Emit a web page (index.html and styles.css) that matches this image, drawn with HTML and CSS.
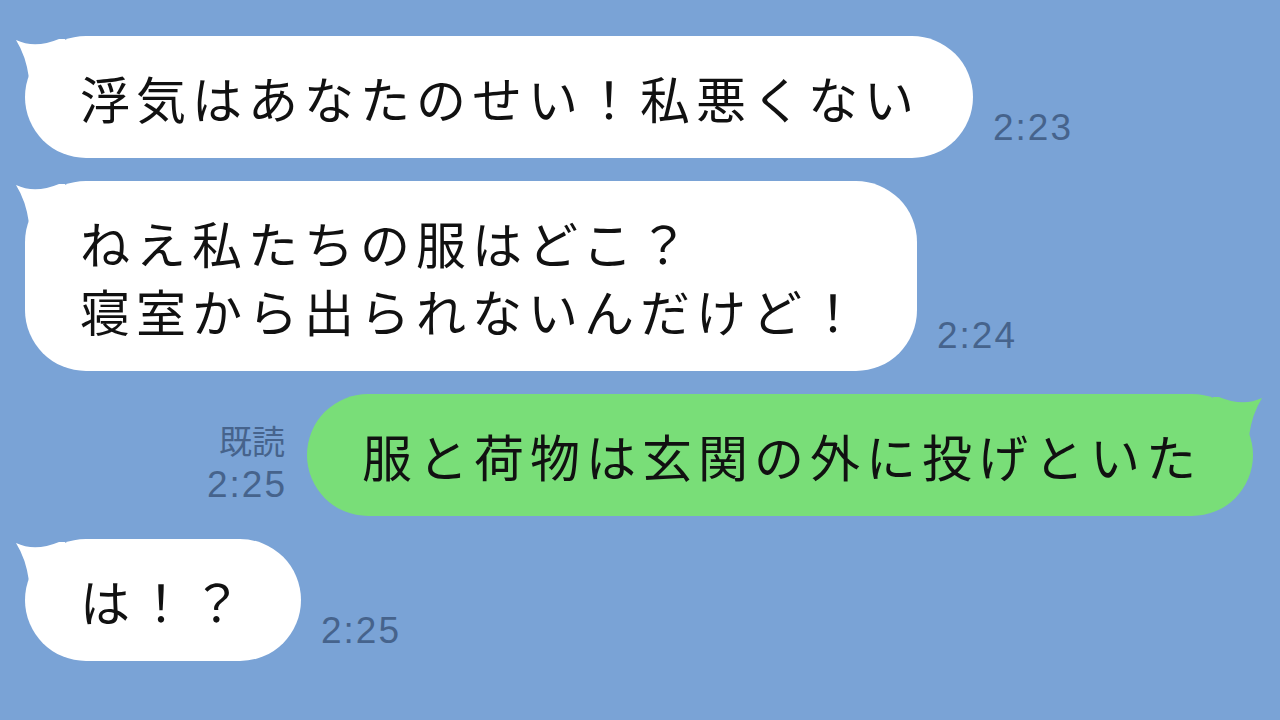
FILE: index.html
```html
<!DOCTYPE html>
<html lang="ja">
<head>
  <meta charset="UTF-8" />
  <title>トーク</title>
  <link rel="stylesheet" href="styles.css">
</head>
<body>
  <div class="chat">
    <div class="row">
      <div class="bubble left">
        <svg class="tail" viewBox="0 0 50 60"><path d="M1 4 Q20 13 44 3 L50 3 L50 60 L12 60 L14 42 Q11 20 1 4 Z"/></svg>
        <p>浮気はあなたのせい！私悪くない</p>
      </div>
      <span class="time">2:23</span>
    </div>

    <div class="row">
      <div class="bubble left">
        <svg class="tail" viewBox="0 0 50 60"><path d="M1 4 Q20 13 44 3 L50 3 L50 60 L12 60 L14 42 Q11 20 1 4 Z"/></svg>
        <p>ねえ私たちの服はどこ？<br>寝室から出られないんだけど！</p>
      </div>
      <span class="time raised">2:24</span>
    </div>

    <div class="row mine">
      <div class="meta">
        <span class="read">既読</span>
        <span class="time">2:25</span>
      </div>
      <div class="bubble right">
        <svg class="tail" viewBox="0 0 50 60"><path d="M1 4 Q20 13 44 3 L50 3 L50 60 L12 60 L14 42 Q11 20 1 4 Z"/></svg>
        <p>服と荷物は玄関の外に投げといた</p>
      </div>
    </div>

    <div class="row">
      <div class="bubble left">
        <svg class="tail" viewBox="0 0 50 60"><path d="M1 4 Q20 13 44 3 L50 3 L50 60 L12 60 L14 42 Q11 20 1 4 Z"/></svg>
        <p>は！？</p>
      </div>
      <span class="time">2:25</span>
    </div>
  </div>
</body>
</html>
```

FILE: styles.css
```css
body {
  margin: 0;
  background-color: #7aa3d6;
  font-family: "Noto Sans CJK JP", "Noto Sans", sans-serif;
  color: #111;
}
.chat {
  display: flex;
  flex-direction: column;
  gap: 23px;
  padding: 36px 27px 0 25px;
}
.row {
  display: flex;
  align-items: flex-end;
}
.row.mine {
  justify-content: flex-end;
}
.bubble {
  position: relative;
  background: white;
  border-radius: 61px;
  padding: 27px 53px 27px 55px;
}
.bubble p {
  position: relative;
  margin: 0;
  font-size: 50px;
  letter-spacing: 6px;
  line-height: 68px;
  white-space: nowrap;
}
.bubble.right {
  background: #79de78;
  padding-right: 51px;
}
.tail {
  position: absolute;
  top: 0;
  left: -10px;
  width: 50px;
  height: 60px;
  fill: white;
}
.bubble.right .tail {
  left: auto;
  right: -10px;
  fill: #79de78;
  transform: scaleX(-1);
}
.time {
  color: #46638c;
  font-family: "Liberation Sans", Arial, sans-serif;
  font-size: 37px;
  letter-spacing: 2px;
  line-height: 36px;
  margin: 0 0 12px 20px;
}
.time.raised {
  margin-bottom: 17px;
}
.meta {
  display: flex;
  flex-direction: column;
  align-items: flex-end;
  margin: 0 20px 11px 0;
  color: #46638c;
}
.meta .read {
  font-size: 33px;
  line-height: 40px;
  margin-right: 2px;
  margin-bottom: 5px;
}
.meta .time {
  margin: 0;
  line-height: 40px;
}
```
